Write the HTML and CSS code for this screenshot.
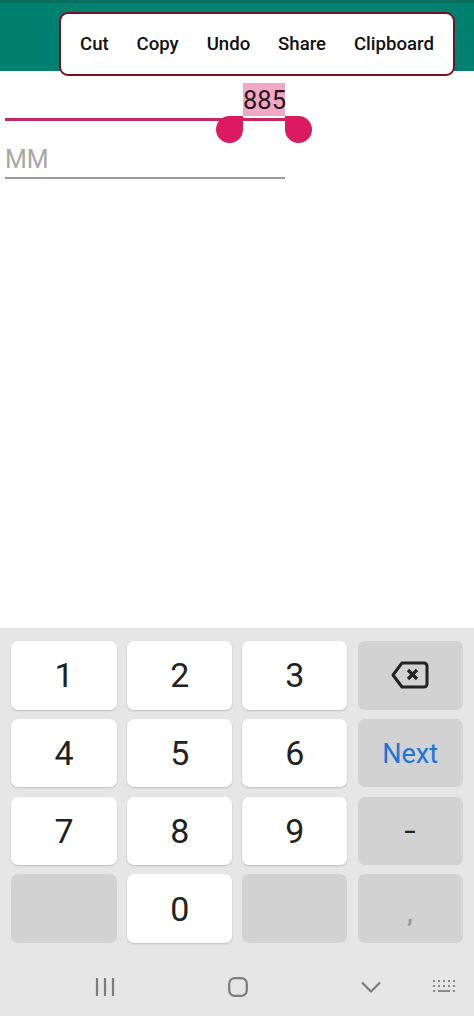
FILE: index.html
```html
<!DOCTYPE html>
<html lang="en">
<head>
    <meta charset="UTF-8">
    <meta name="viewport" content="width=device-width, initial-scale=1.0">
    <title>Measurements</title>
    <link rel="stylesheet" href="styles.css">
</head>
<body>

<div class="screen">
    <div class="app-bar"></div>

    <!-- text selection menu, sits over the app bar -->
    <div class="selection-menu">
        <span>Cut</span>
        <span>Copy</span>
        <span>Undo</span>
        <span>Share</span>
        <span>Clipboard</span>
    </div>

    <div class="form">
        <div class="field field-active">
            <span class="selected-text">885</span>
            <span class="handle handle-left"></span>
            <span class="handle handle-right"></span>
        </div>
        <div class="field field-empty">MM</div>
    </div>

    <div class="keyboard">
        <div class="keys">
            <div class="key">1</div>
            <div class="key">2</div>
            <div class="key">3</div>
            <div class="key key-grey">
                <svg width="38" height="28" viewBox="0 0 38 28">
                    <path d="M11 2H33a3 3 0 0 1 3 3V23a3 3 0 0 1-3 3H11L2 14Z" fill="none" stroke="#222" stroke-width="3" stroke-linejoin="round"/>
                    <path d="M17 9l9 9M26 9l-9 9" fill="none" stroke="#222" stroke-width="3.2"/>
                </svg>
            </div>
            <div class="key">4</div>
            <div class="key">5</div>
            <div class="key">6</div>
            <div class="key key-grey key-next">Next</div>
            <div class="key">7</div>
            <div class="key">8</div>
            <div class="key">9</div>
            <div class="key key-grey key-minus">-</div>
            <div class="key key-grey"></div>
            <div class="key">0</div>
            <div class="key key-grey"></div>
            <div class="key key-grey key-comma">,</div>
        </div>

        <div class="nav-bar">
            <svg width="20" height="20" viewBox="0 0 20 20">
                <path d="M2 1V19M10 1V19M18 1V19" stroke="#7d7d7d" stroke-width="2.2" fill="none"/>
            </svg>
            <svg width="20" height="20" viewBox="0 0 20 20">
                <rect x="1.2" y="1.2" width="17.6" height="17.6" rx="5.5" stroke="#7d7d7d" stroke-width="2.2" fill="none"/>
            </svg>
            <svg width="20" height="12" viewBox="0 0 20 12">
                <path d="M1 1.5L10 10.5L19 1.5" stroke="#7d7d7d" stroke-width="2.2" fill="none"/>
            </svg>
            <svg class="keyboard-toggle" width="22" height="13" viewBox="0 0 22 13">
                <g fill="#8a8a8a">
                    <rect x="0" y="0" width="2" height="2"/><rect x="5" y="0" width="2" height="2"/><rect x="10" y="0" width="2" height="2"/><rect x="15" y="0" width="2" height="2"/><rect x="20" y="0" width="2" height="2"/>
                    <rect x="0" y="5" width="2" height="2"/><rect x="5" y="5" width="2" height="2"/><rect x="10" y="5" width="2" height="2"/><rect x="15" y="5" width="2" height="2"/><rect x="20" y="5" width="2" height="2"/>
                    <rect x="0" y="10" width="2" height="2"/><rect x="5" y="10" width="12" height="2"/><rect x="20" y="10" width="2" height="2"/>
                </g>
            </svg>
        </div>
    </div>
</div>

</body>
</html>
```

FILE: styles.css
```css
* {
    box-sizing: border-box;
}

body {
    margin: 0;
    font-family: Roboto, "Liberation Sans", sans-serif;
    background-color: #fff;
}

.screen {
    position: relative;
    display: flex;
    flex-direction: column;
    height: 1016px;
    overflow: hidden;
}

.app-bar {
    height: 71px;
    background-color: #00806f;
    border-top: 3px solid #086f61;
}

.selection-menu {
    position: absolute;
    top: 12px;
    left: 59px;
    width: 396px;
    height: 64px;
    display: flex;
    justify-content: space-between;
    align-items: center;
    padding: 0 19px 0 19px;
    background-color: #fff;
    border: 2.5px solid #7b0f22;
    border-radius: 9px;
    font-size: 18.6px;
    font-weight: 500;
    color: #111;
}

.form {
    padding: 12px 0 0 5px;
}

.field {
    position: relative;
    width: 280px;
}

.field-active {
    height: 38px;
    border-bottom: 3px solid #c4265f;
}

.selected-text {
    position: absolute;
    top: 0;
    right: 0;
    width: 42px;
    height: 33px;
    background-color: #f0a8c4;
    color: #2a1420;
    font-size: 25.5px;
    line-height: 35px;
    text-align: center;
}

.handle {
    position: absolute;
    top: 33px;
    width: 27px;
    height: 27px;
    background-color: #dc1a60;
}

.handle-left {
    left: 211px;
    border-radius: 50% 0 50% 50%;
}

.handle-right {
    left: 280px;
    border-radius: 0 50% 50% 50%;
}

.field-empty {
    height: 41px;
    margin-top: 17px;
    border-bottom: 2px solid #9a9a9a;
    color: #a6a6a6;
    font-size: 25px;
    line-height: 44px;
}

.keyboard {
    margin-top: auto;
    height: 388px;
    background-color: #e6e6e6;
    padding: 13px 11px 0;
}

.keys {
    display: grid;
    grid-template-columns: 106px 105px 105px 105px;
    grid-auto-rows: 68.5px;
    column-gap: 10.2px;
    row-gap: 9.25px;
}

.key {
    display: flex;
    justify-content: center;
    align-items: center;
    background-color: #fff;
    border-radius: 7px;
    box-shadow: 0 1px 2px rgba(0, 0, 0, 0.18);
    font-size: 34px;
    color: #222;
}

.key-grey {
    background-color: #d2d2d2;
    box-shadow: none;
}

.key-next {
    padding-top: 2px;
    font-size: 27px;
    color: #1a76d8;
}

.key-minus {
    font-size: 42px;
    font-weight: 300;
}

.key-comma {
    align-items: flex-end;
    padding-bottom: 15px;
    font-size: 24px;
    font-weight: 700;
    color: #989898;
}

.nav-bar {
    display: flex;
    align-items: center;
    gap: 113px;
    height: 44px;
    margin-top: 22px;
    padding-left: 84px;
}

.nav-bar svg {
    flex: none;
}

.keyboard-toggle {
    margin-left: -61px;
}
```
